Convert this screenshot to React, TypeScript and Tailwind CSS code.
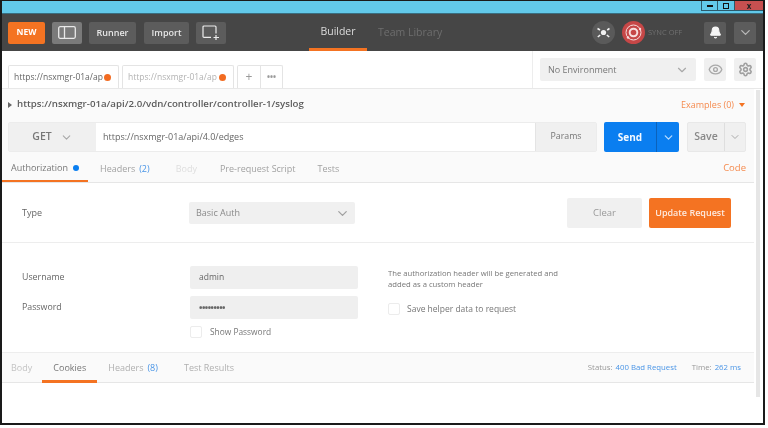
import { ChevronDown, Bell, Settings, Eye } from "lucide-react";

const font = "font-['Open_Sans','Liberation_Sans',sans-serif]";

function HeaderButton({ label, w }: { label: string; w: string }) {
  return (
    <div className={`${w} h-[22px] rounded-[2px] bg-[#5c5c5c] flex items-center justify-center text-[9px] font-semibold text-[#e6e6e6]`}>
      {label}
    </div>
  );
}

function Tab({ active, w }: { active?: boolean; w: string }) {
  return (
    <div className={`${w} h-[23px] border border-b-0 border-[#e4e4e4] rounded-t-[2px] bg-white flex items-center pl-[5px] pr-[7px] justify-between`}>
      <span className={`whitespace-nowrap text-[8.5px] ${active ? "text-[#666]" : "text-[#b3b3b3]"}`}>
        https://nsxmgr-01a/ap
      </span>
      <span className="w-[7px] h-[7px] rounded-full bg-[#f26b21]" />
    </div>
  );
}

function Checkbox() {
  return <span className="w-[12px] h-[12px] rounded-[2px] border border-[#ececec] bg-white block" />;
}

export default function App() {
  return (
    <div className={`w-[768px] h-[428px] bg-white overflow-hidden ${font} blur-[0.4px]`}>
      <div className="w-[765px] h-[425px] border-l-2 border-t border-r-2 border-b-2 border-[#1a1a1a] flex flex-col">
        {/* title bar */}
        <div className="h-[13px] bg-[#62c9ea] border-b border-[#3a6e80] flex justify-end items-start shrink-0">
          <div className="flex h-[10px] border-b border-l border-[#2c5a6c]">
            <div className="w-[16px] border-r border-[#2c5a6c] flex items-center justify-center">
              <span className="w-[6px] h-[2px] bg-[#111]" />
            </div>
            <div className="w-[17px] border-r border-[#2c5a6c] flex items-center justify-center">
              <span className="w-[6px] h-[6px] border-[1.5px] border-[#111]" />
            </div>
            <div className="w-[28px] bg-[#c75050] flex items-center justify-center text-[8px] font-bold text-[#222] leading-none">x</div>
          </div>
        </div>

        {/* header */}
        <div className="h-[37px] bg-[#464646] flex items-center pl-[6px] shrink-0 relative">
          <div className="w-[37px] h-[22px] rounded-[2px] bg-[#f47322] flex items-center justify-center text-[8.5px] font-bold text-white">NEW</div>
          <div className="w-[30px] h-[22px] ml-[7px] rounded-[2px] bg-[#7a7a7a] flex items-center justify-center">
            <svg width="18" height="13" viewBox="0 0 18 13" fill="none" stroke="#e8e8e8" strokeWidth="1.3">
              <rect x="0.7" y="0.7" width="16.6" height="11.6" rx="1.5" />
              <path d="M6.5 1v11" />
            </svg>
          </div>
          <div className="ml-[7px]"><HeaderButton label="Runner" w="w-[47px]" /></div>
          <div className="ml-[8px]"><HeaderButton label="Import" w="w-[45px]" /></div>
          <div className="w-[30px] h-[22px] ml-[7px] rounded-[2px] bg-[#5c5c5c] flex items-center justify-center">
            <svg width="18" height="15" viewBox="0 0 18 15" fill="none" stroke="#ececec" strokeWidth="1.2">
              <path d="M9 12.4H2a1 1 0 0 1-1-1V2a1 1 0 0 1 1-1h11a1 1 0 0 1 1 1v6.5" />
              <path d="M14 10v5M11.5 12.5h5.5" />
            </svg>
          </div>
          <div className="ml-[83px] w-[58px] h-[37px] border-b-[3px] border-[#f47322] flex items-center justify-center text-[10.5px] text-[#dcdcdc] pt-[2px]">Builder</div>
          <div className="ml-[11px] text-[10.5px] text-[#6e6e6e]">Team Library</div>
          <div className="ml-auto flex items-center">
            <div className="w-[23px] h-[23px] rounded-full bg-[#5a5a5a] flex items-center justify-center">
              <svg width="15" height="15" viewBox="0 0 15 15" fill="#f0f0f0" stroke="#f0f0f0">
                <circle cx="7.5" cy="7.5" r="2.6" stroke="none" />
                <path d="M1.5 3.5l2.5 1.5M13.5 3.5L11.2 5M1.8 12l2.4-2M13.2 12l-2.4-2" strokeWidth="1.6" />
              </svg>
            </div>
            <div className="w-[23px] h-[23px] ml-[7px] rounded-full bg-[#c64747] flex items-center justify-center">
              <svg width="19" height="19" viewBox="0 0 19 19" fill="none" stroke="#f6dddd">
                <circle cx="9.5" cy="9.5" r="7.5" strokeWidth="1" />
                <circle cx="9.5" cy="9.5" r="3.8" strokeWidth="2" />
                <circle cx="16" cy="6" r="1.2" fill="#f6dddd" stroke="none" />
                <circle cx="4" cy="14.5" r="1.2" fill="#f6dddd" stroke="none" />
              </svg>
            </div>
            <div className="ml-[3px] w-[48px] text-[7.5px] text-[#707070] whitespace-nowrap">SYNC OFF</div>
            <div className="w-[22px] h-[22px] ml-[8px] rounded-[2px] bg-[#5a5a5a] flex items-center justify-center">
              <Bell size={13} fill="#f5f5f5" stroke="#f5f5f5" />
            </div>
            <div className="w-[22px] h-[22px] ml-[8px] mr-[7px] rounded-[2px] bg-[#5c5c5c] flex items-center justify-center">
              <ChevronDown size={15} stroke="#b8b8b8" />
            </div>
          </div>
        </div>

        {/* tabs row */}
        <div className="h-[38px] bg-white border-b border-[#e8e8e8] flex shrink-0">
          <div className="flex-1 flex items-end pl-[6px]">
            <Tab active w="w-[111px]" />
            <div className="ml-[3px]"><Tab w="w-[112px]" /></div>
            <div className="ml-[3px] flex h-[23px] border border-b-0 border-[#e4e4e4] rounded-t-[2px] text-[#999]">
              <div className="w-[23px] flex items-center justify-center border-r border-[#e4e4e4] text-[12px]">+</div>
              <div className="w-[21px] flex items-center justify-center text-[8px] font-bold leading-none">•••</div>
            </div>
          </div>
          <div className="w-[231px] border-l border-[#ededed] flex items-start pt-[7px] pl-[7px] shrink-0">
            <div className="w-[156px] h-[23px] rounded-[2px] bg-[#f0f0f0] flex items-center justify-between pl-[8px] pr-[7px] text-[9px] text-[#777]">
              No Environment
              <ChevronDown size={14} stroke="#a8a8a8" />
            </div>
            <div className="w-[22px] h-[23px] ml-[8px] rounded-[2px] bg-[#f0f0f0] flex items-center justify-center">
              <Eye size={15} stroke="#a8a8a8" strokeWidth={2.2} />
            </div>
            <div className="w-[22px] h-[23px] ml-[8px] rounded-[2px] bg-[#f0f0f0] flex items-center justify-center">
              <Settings size={15} stroke="#a0a0a0" strokeWidth={2.6} />
            </div>
          </div>
        </div>

        {/* body */}
        <div className="flex-1 flex min-h-0">
          <div className="w-[752px] flex flex-col shrink-0">
            <div className="bg-[#fafafa] border-b border-[#e6e6e6] shrink-0">
              <div className="h-[33px] flex items-center pl-[6px] pr-[9px] pb-[2px]">
                <span className="w-0 h-0 border-y-[3px] border-y-transparent border-l-[4px] border-l-[#666] mr-[5px]" />
                <span className="text-[9.7px] font-semibold text-[#5c5c5c]">https://nsxmgr-01a/api/2.0/vdn/controller/controller-1/syslog</span>
                <span className="ml-auto text-[9px] text-[#f58b4f] flex items-center">
                  Examples (0)
                  <span className="ml-[5px] w-0 h-0 border-x-[3.5px] border-x-transparent border-t-[4px] border-t-[#f47322]" />
                </span>
              </div>
              <div className="h-[30px] flex pl-[6px]">
                <div className="flex w-[589px] rounded-[2px] border border-[#ececec]">
                  <div className="w-[87px] bg-[#f0f0f0] flex items-center justify-center text-[10.5px] font-semibold text-[#777]">
                    GET
                    <ChevronDown size={13} stroke="#a8a8a8" className="ml-[8px]" />
                  </div>
                  <div className="flex-1 bg-white flex items-center pl-[7px] text-[9px] text-[#666]">https://nsxmgr-01a/api/4.0/edges</div>
                  <div className="w-[61px] bg-[#f0f0f0] border-l border-[#e4e4e4] flex items-center justify-center text-[8.8px] text-[#777]">Params</div>
                </div>
                <div className="ml-[7px] flex w-[75px] rounded-[2px] bg-[#0a7ef0]">
                  <div className="w-[52px] flex items-center justify-center text-[10px] font-bold text-[#f4f9ff]">Send</div>
                  <div className="flex-1 border-l border-[#0b62bb] flex items-center justify-center">
                    <ChevronDown size={13} stroke="#b9dcff" strokeWidth={2.4} />
                  </div>
                </div>
                <div className="ml-[8px] flex w-[59px] rounded-[2px] bg-[#f0f0f0] border border-[#e8e8e8]">
                  <div className="w-[36px] flex items-center justify-center text-[10.5px] font-semibold text-[#888]">Save</div>
                  <div className="flex-1 border-l border-[#dedede] flex items-center justify-center">
                    <ChevronDown size={12} stroke="#aaa" />
                  </div>
                </div>
              </div>
              <div className="h-[30px] flex items-end text-[9px] text-[#a2a2a2]">
                <div className="w-[86px] h-[30px] border-b-2 border-[#f47322] pl-[9px] pt-[3px] flex items-center text-[#777]">
                  Authorization
                  <span className="ml-[5px] w-[6px] h-[6px] rounded-full bg-[#0a7ef0]" />
                </div>
                <div className="h-[28px] flex items-center ml-[12px] pt-[1px]">Headers<span className="ml-[4px] text-[#4a95e6]">(2)</span></div>
                <div className="h-[28px] flex items-center ml-[26px] pt-[1px] text-[#dedede]">Body</div>
                <div className="h-[28px] flex items-center ml-[23px] pt-[1px]">Pre-request Script</div>
                <div className="h-[28px] flex items-center ml-[22px] pt-[1px]">Tests</div>
                <div className="h-[28px] flex items-center ml-auto mr-[8px] pt-[1px] text-[9.5px] text-[#f58b4f]">Code</div>
              </div>
            </div>

            {/* auth type */}
            <div className="h-[60px] bg-white border-b border-[#ededed] flex items-start shrink-0">
              <div className="w-[187px] pl-[20px] mt-[23px] text-[9px] leading-[14px] text-[#666]">Type</div>
              <div className="mt-[19px] w-[166px] h-[22px] rounded-[2px] bg-[#f0f0f0] flex items-center justify-between pl-[7px] pr-[5px] text-[9px] text-[#8a8a8a]">
                Basic Auth
                <ChevronDown size={15} stroke="#a0a0a0" />
              </div>
              <div className="ml-[212px] mt-[15px] w-[75px] h-[30px] rounded-[2px] bg-[#f0f0f0] flex items-center justify-center text-[9.5px] text-[#999]">Clear</div>
              <div className="ml-[7px] mt-[15px] w-[82px] h-[30px] rounded-[2px] bg-[#f47322] flex items-center justify-center text-[9px] font-semibold text-[#fdeadf]">Update Request</div>
            </div>

            {/* credentials */}
            <div className="h-[110px] bg-white border-b border-[#ededed] flex shrink-0">
              <div className="w-[188px] pl-[20px] pt-[27px] text-[8.8px] text-[#666] leading-[14px]">
                <div>Username</div>
                <div className="mt-[16px]">Password</div>
              </div>
              <div className="w-[168px] pt-[23px]">
                <div className="h-[23px] rounded-[2px] bg-[#efefef] flex items-center pl-[9px] text-[8.5px] text-[#666]">admin</div>
                <div className="h-[23px] mt-[7px] rounded-[2px] bg-[#efefef] flex items-center pl-[9px] text-[9px] font-bold tracking-[-0.5px] text-[#666]">•••••••••</div>
                <div className="flex items-center mt-[7px] text-[8.4px] text-[#777]">
                  <Checkbox />
                  <span className="ml-[8px]">Show Password</span>
                </div>
              </div>
              <div className="ml-[30px] pt-[23px]">
                <div className="text-[7.7px] leading-[11px] text-[#777] pt-[2px] w-[178px]">
                  The authorization header will be generated and added as a custom header
                </div>
                <div className="flex items-center mt-[13px] text-[8.5px] text-[#777]">
                  <Checkbox />
                  <span className="ml-[7px]">Save helper data to request</span>
                </div>
              </div>
            </div>

            {/* response tabs */}
            <div className="h-[30px] bg-[#fafafa] border-b border-[#e6e6e6] flex items-center text-[9px] text-[#b0b0b0] shrink-0">
              <div className="ml-[9px] text-[#c4c4c4]">Body</div>
              <div className="ml-[10px] w-[55px] h-[30px] border-b-[3px] border-[#f47322] flex items-center justify-center text-[#777] pt-[2px] -mb-px">Cookies</div>
              <div className="ml-[11px]">Headers<span className="ml-[4px] text-[#4a95e6]">(8)</span></div>
              <div className="ml-[26px]">Test Results</div>
              <div className="ml-auto mr-[13px] flex text-[7.8px]">
                <span className="text-[#999]">Status:</span>
                <span className="ml-[3px] text-[#4a95e6]">400 Bad Request</span>
                <span className="ml-[15px] text-[#999]">Time:</span>
                <span className="ml-[3px] text-[#4a95e6]">262 ms</span>
              </div>
            </div>
            <div className="flex-1 bg-white" />
          </div>
          <div className="w-[8px] pl-[2px] pt-[1px] shrink-0">
            <div className="w-[4px] h-[307px] bg-[#e6e6e6]" />
          </div>
        </div>
      </div>
    </div>
  );
}
